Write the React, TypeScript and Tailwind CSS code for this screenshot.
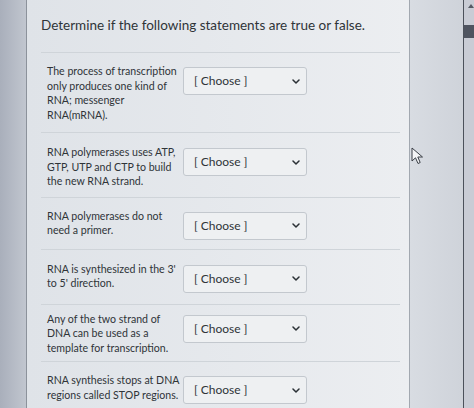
import React from "react";

type Row = { lines: string[]; pad: string };

const rows: Row[] = [
  {
    lines: ["The process of transcription", "only produces one kind of", "RNA; messenger", "RNA(mRNA)."],
    pad: "pt-[11px] pb-[10px]",
  },
  {
    lines: ["RNA polymerases uses ATP,", "GTP, UTP and CTP to build", "the new RNA strand."],
    pad: "pt-[12px] pb-[8px]",
  },
  {
    lines: ["RNA polymerases do not", "need a primer."],
    pad: "pt-[11px] pb-[9px]",
  },
  {
    lines: ["RNA is synthesized in the 3'", "to 5' direction."],
    pad: "pt-[12px] pb-[11px]",
  },
  {
    lines: ["Any of the two strand of", "DNA can be used as a", "template for transcription."],
    pad: "pt-[7px] pb-[6px]",
  },
  {
    lines: ["RNA synthesis stops at DNA", "regions called STOP regions."],
    pad: "pt-[11px] pb-[8px]",
  },
];

function Chevron() {
  return (
    <svg width="8" height="5" viewBox="0 0 8 5" fill="none">
      <path d="M1 1 L4 4 L7 1" stroke="#2b3136" strokeWidth="1.5" strokeLinecap="round" strokeLinejoin="round" />
    </svg>
  );
}

function Select() {
  return (
    <div className="mt-[3px] flex h-[28px] w-[124px] shrink-0 items-center justify-between rounded-[3px] border border-[#c3c8ce] bg-[#eef0f2] pl-[10px] pr-[6px] text-[12px] text-[#2f3438]">
      <span>[ Choose ]</span>
      <Chevron />
    </div>
  );
}

export default function App() {
  return (
    <div
      className="relative flex h-[408px] w-[474px] overflow-hidden bg-[#d3d7de]"
      style={{ fontFamily: "Lato, 'Open Sans', sans-serif" }}
    >
      {/* left margin */}
      <div className="w-[27px] shrink-0 border-r border-[#8c929b] bg-gradient-to-r from-[#a9afbb] to-[#c1c6cf]" />

      {/* main panel */}
      <div className="w-[383px] shrink-0 border-r border-[#a2a8b0] bg-gradient-to-r from-[#dfe3e8] to-[#eceef1] pl-[14px] pr-[9px]">
        <div className="pt-[17px] text-[13.5px] leading-[16px] text-[#2f3438]">
          Determine if the following statements are true or false.
        </div>
        <div className="mt-[19px] border-t border-[#cfd4d9]">
          {rows.map((r, i) => (
            <div
              key={i}
              className={`flex items-start pl-[6px] ${r.pad} ${i < rows.length - 1 ? "border-b border-[#cfd4d9]" : ""}`}
            >
              <div className="w-[136px] shrink-0 text-[10.6px] leading-[14.5px] text-[#2f3438]">
                {r.lines.map((l, j) => (
                  <div key={j} className="whitespace-nowrap">
                    {l}
                  </div>
                ))}
              </div>
              <Select />
            </div>
          ))}
        </div>
      </div>

      {/* right gray area */}
      <div className="flex-1 bg-gradient-to-r from-[#d8dce2] to-[#cfd3da]" />

      {/* scrollbar */}
      <div className="relative w-[11px] shrink-0 border-l border-[#4c515b] bg-[#c9ccd5]">
        <div className="absolute left-0 right-0 top-[25px] h-[13px] bg-[#4f5460]" />
        <div className="absolute left-[4px] top-[4px] h-0 w-0 border-x-[3px] border-b-[4px] border-x-transparent border-b-[#555a64]" />
      </div>

      {/* mouse cursor */}
      <svg className="absolute left-[411px] top-[147px]" width="14" height="18" viewBox="0 0 14 18">
        <path
          d="M1 1 L1 14 L4.5 10.8 L7 16.5 L9.2 15.5 L6.8 10 L11.5 10 Z"
          fill="#f4f5f7"
          stroke="#3a3f46"
          strokeWidth="1"
          strokeLinejoin="round"
        />
      </svg>
    </div>
  );
}
